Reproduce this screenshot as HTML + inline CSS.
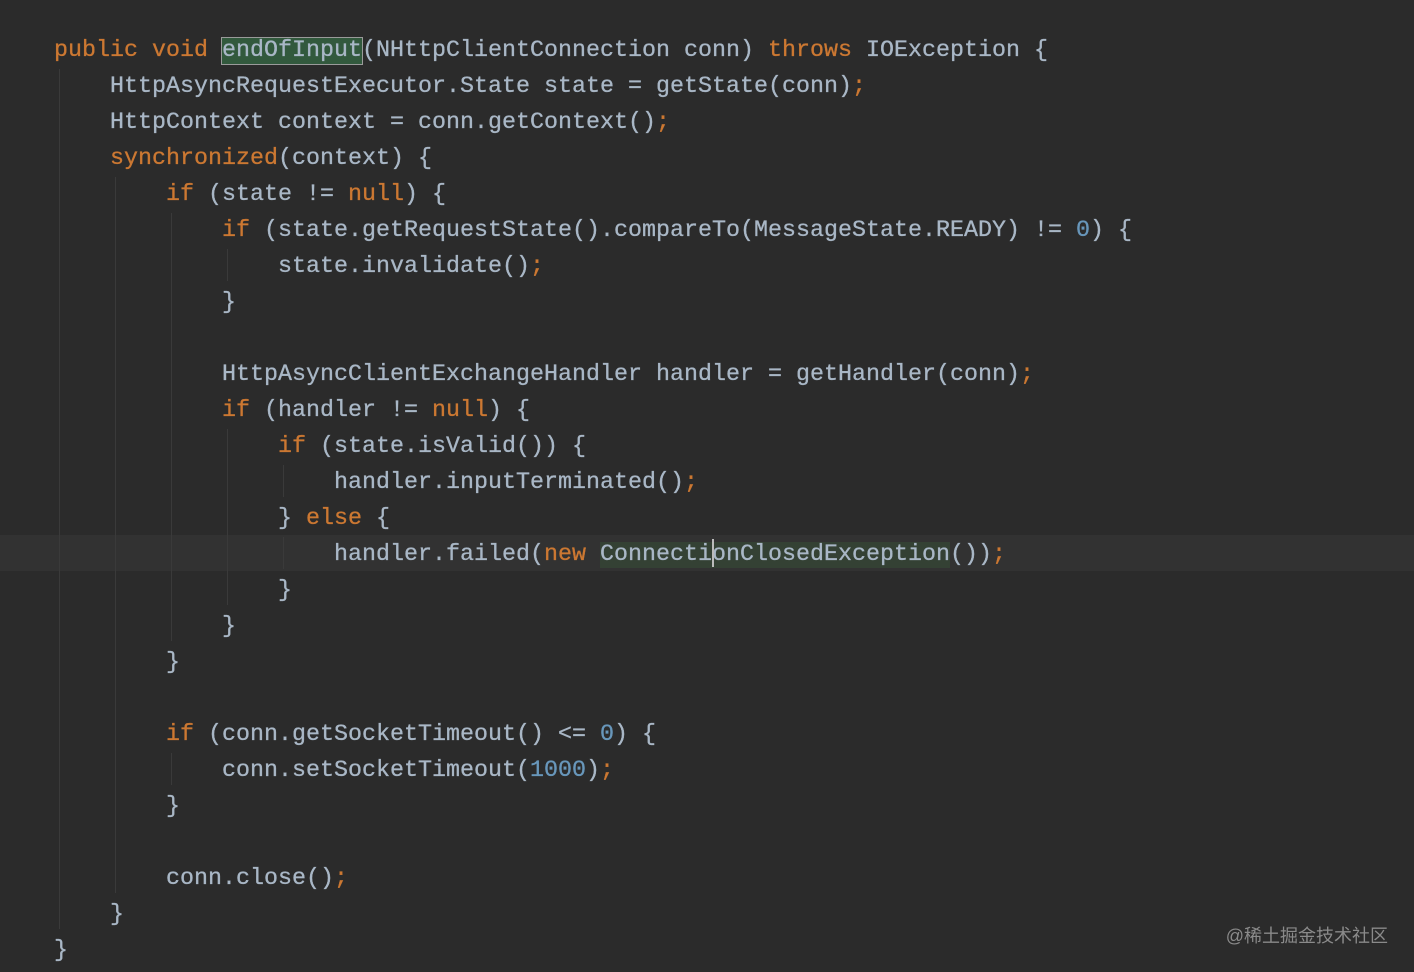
<!DOCTYPE html>
<html><head><meta charset="utf-8"><style>
html,body{margin:0;padding:0;}
body{width:1414px;height:972px;background:#2b2b2b;overflow:hidden;position:relative;font-family:"Liberation Mono",monospace;}
.cur{position:absolute;left:0;top:535px;width:1414px;height:36px;background:#323232;}
pre{position:absolute;left:54px;top:33px;margin:0;font-family:"Liberation Mono",monospace;font-size:23.33px;line-height:36px;color:#a9b7c6;white-space:pre;-webkit-text-stroke:0.3px currentColor;}
.k{color:#cc7832}.n{color:#6897bb}
.h1{background:#32593d;outline:1.5px solid #9a9a9a;}
.h2{background:#344134;}
.g{position:absolute;width:1px;background:#3a3a3a;}
.caret{position:absolute;left:712px;top:539px;width:2px;height:28px;background:#bbbbbb;}
.wm{position:absolute;right:26px;top:922px;font-family:"Liberation Sans","Noto Sans CJK SC",sans-serif;font-size:18px;color:#8a8a8a;}
</style></head><body>
<div class="cur"></div>
<div class="g" style="left:59px;top:69px;height:860px"></div>
<div class="g" style="left:115px;top:177px;height:716px"></div>
<div class="g" style="left:171px;top:213px;height:428px"></div>
<div class="g" style="left:171px;top:753px;height:32px"></div>
<div class="g" style="left:227px;top:249px;height:32px"></div>
<div class="g" style="left:227px;top:429px;height:176px"></div>
<div class="g" style="left:283px;top:465px;height:32px"></div>
<div class="g" style="left:283px;top:537px;height:32px"></div>
<pre><span class="k">public void </span><span class="h1">endOfInput</span>(NHttpClientConnection conn) <span class="k">throws </span>IOException {
    HttpAsyncRequestExecutor.State state = getState(conn)<span class="k">;</span>
    HttpContext context = conn.getContext()<span class="k">;</span>
    <span class="k">synchronized</span>(context) {
        <span class="k">if </span>(state != <span class="k">null</span>) {
            <span class="k">if </span>(state.getRequestState().compareTo(MessageState.READY) != <span class="n">0</span>) {
                state.invalidate()<span class="k">;</span>
            }

            HttpAsyncClientExchangeHandler handler = getHandler(conn)<span class="k">;</span>
            <span class="k">if </span>(handler != <span class="k">null</span>) {
                <span class="k">if </span>(state.isValid()) {
                    handler.inputTerminated()<span class="k">;</span>
                } <span class="k">else </span>{
                    handler.failed(<span class="k">new </span><span class="h2">ConnectionClosedException</span>())<span class="k">;</span>
                }
            }
        }

        <span class="k">if </span>(conn.getSocketTimeout() &lt;= <span class="n">0</span>) {
            conn.setSocketTimeout(<span class="n">1000</span>)<span class="k">;</span>
        }

        conn.close()<span class="k">;</span>
    }
}</pre>
<div class="caret"></div>
<div class="wm">@稀土掘金技术社区</div>
</body></html>
